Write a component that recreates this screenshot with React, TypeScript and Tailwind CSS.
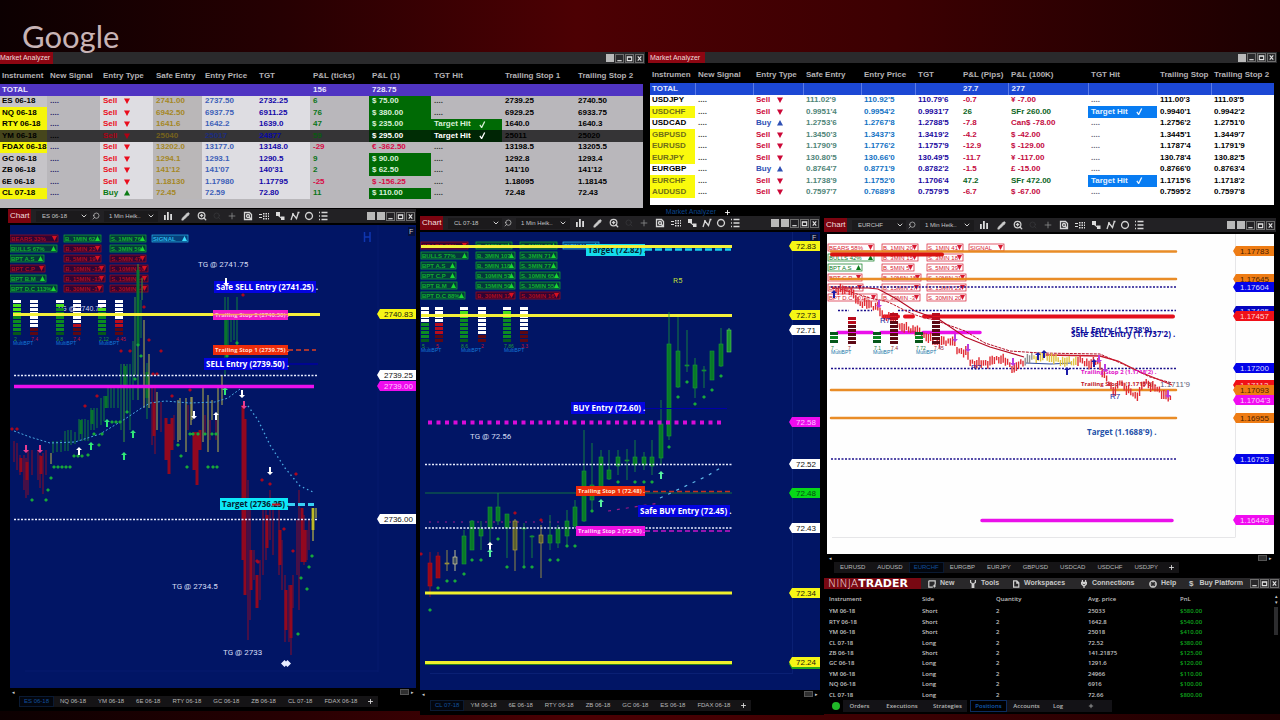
import React from "react";
import { ChevronDown, Pencil, Plus, Search, ZoomIn } from "lucide-react";

/* ---------- Market analyzer tables ---------- */

type Row = string[];

const FUTURES_HEAD = ["Instrument", "New Signal", "Entry Type", "Safe Entry", "Entry Price", "TGT", "P&L (ticks)", "P&L (1)", "TGT Hit", "Trailing Stop 1", "Trailing Stop 2"];
const FUTURES: Row[] = [
  ["ES 06-18", "....", "Sell", "2741.00", "2737.50", "2732.25", "6", "$ 75.00", "", "2739.25", "2740.50"],
  ["NQ 06-18", "....", "Sell", "6942.50", "6937.75", "6911.25", "76", "$ 380.00", "", "6929.25", "6933.75"],
  ["RTY 06-18", "....", "Sell", "1641.6", "1642.2", "1639.0", "47", "$ 235.00", "hit", "1640.0", "1640.3"],
  ["YM 06-18", "....", "Sell", "25040", "25017", "24877", "59", "$ 295.00", "hit", "25011", "25020"],
  ["FDAX 06-18", "....", "Sell", "13202.0", "13177.0", "13148.0", "-29", "€ -362.50", "", "13198.5", "13205.5"],
  ["GC 06-18", "....", "Sell", "1294.1", "1293.1", "1290.5", "9", "$ 90.00", "", "1292.8", "1293.4"],
  ["ZB 06-18", "....", "Sell", "141'12", "141'07", "140'31", "2", "$ 62.50", "", "141'10", "141'12"],
  ["6E 06-18", "....", "Sell", "1.18130", "1.17980", "1.17795", "-25", "$ -156.25", "", "1.18095", "1.18145"],
  ["CL 07-18", "....", "Buy", "72.45", "72.59", "72.80", "11", "$ 110.00", "", "72.48", "72.43"],
];
const FUTURES_YELLOW = ["NQ 06-18", "RTY 06-18", "FDAX 06-18", "CL 07-18"];
const FUTURES_COLS = ["w-[47px]", "w-[53px]", "w-[53px]", "w-[49px]", "w-[54px]", "w-[54px]", "w-[59px]", "w-[62px]", "w-[71px]", "w-[73px]", "w-[68px]"];

const FOREX_HEAD = ["Instrumen", "New Signal", "Entry Type", "Safe Entry", "Entry Price", "TGT", "P&L (Pips)", "P&L (100K)", "TGT Hit", "Trailing Stop", "Trailing Stop 2"];
const FOREX: Row[] = [
  ["USDJPY", "....", "Sell", "111.02'9", "110.92'5", "110.79'6", "-0.7", "¥ -7.00", "", "111.00'3", "111.03'5"],
  ["USDCHF", "....", "Sell", "0.9951'4", "0.9954'2", "0.9931'7", "26", "SFr 260.00", "hit", "0.9940'1", "0.9942'2"],
  ["USDCAD", "....", "Buy", "1.2753'6", "1.2767'8", "1.2788'5", "-7.8", "Can$ -78.00", "", "1.2756'2", "1.2751'0"],
  ["GBPUSD", "....", "Sell", "1.3450'3", "1.3437'3", "1.3419'2", "-4.2", "$ -42.00", "", "1.3445'1", "1.3449'7"],
  ["EURUSD", "....", "Sell", "1.1790'9", "1.1776'2", "1.1757'9", "-12.9", "$ -129.00", "", "1.1787'4", "1.1791'9"],
  ["EURJPY", "....", "Sell", "130.80'5", "130.66'0", "130.49'5", "-11.7", "¥ -117.00", "", "130.78'4", "130.82'5"],
  ["EURGBP", "....", "Buy", "0.8764'7", "0.8771'9", "0.8782'2", "-1.5", "£ -15.00", "", "0.8766'0", "0.8763'4"],
  ["EURCHF", "....", "Sell", "1.1738'9", "1.1752'0", "1.1706'4", "47.2", "SFr 472.00", "hit", "1.1715'6", "1.1718'2"],
  ["AUDUSD", "....", "Sell", "0.7597'7", "0.7689'8", "0.7579'5", "-6.7", "$ -67.00", "", "0.7595'2", "0.7597'8"],
];
const FOREX_BLACK = ["USDJPY", "USDCAD", "EURGBP"];
const FOREX_COLS = ["w-[45px]", "w-[58px]", "w-[50px]", "w-[58px]", "w-[54px]", "w-[45px]", "w-[48px]", "w-[80px]", "w-[69px]", "w-[54px]", "w-[63px]"];

function futuresCell(row: Row, i: number): string {
  const dark = row[0] === "YM 06-18";
  const loss = row[6].startsWith("-");
  if (i === 0) {
    if (dark) return "bg-[#46461c] text-black";
    return FUTURES_YELLOW.includes(row[0]) ? "bg-[#f6f60a] text-black" : "bg-[#c6c4c8] text-black";
  }
  if (i === 7) return dark ? "bg-[#002d05] text-white" : loss ? "text-[#d80a46]" : "bg-[#006a05] text-[#d8f0d8]";
  if (i === 8) return row[8] ? (dark ? "bg-[#002505] text-white" : "bg-[#006a05] text-[#d8f0d8]") : "text-[#333]";
  const bg = dark ? "bg-[#353436] " : i === 2 || i === 4 || i === 5 ? "bg-[#dedde2] " : i === 3 ? "bg-[#bab7b8] " : "";
  if (i === 1) return bg + (dark ? "text-black" : "text-[#26206a]");
  if (i === 2) return bg + (dark ? "text-[#b00014]" : row[2] === "Buy" ? "text-[#0b7a14]" : "text-[#ea0c1c]");
  if (i === 3) return bg + (dark ? "text-[#75621c]" : "text-[#a58725]");
  if (i === 4) return bg + (dark ? "text-[#1c2c80]" : "text-[#3c60b8]");
  if (i === 5) return bg + (dark ? "text-[#0808a8]" : "text-[#1408a8]");
  if (i === 6) return bg + (loss ? "text-[#d80a46]" : dark ? "text-[#0a5a12]" : "text-[#0a7418]");
  return bg + "text-black";
}

function forexCell(row: Row, i: number): string {
  const loss = row[6].startsWith("-");
  if (i === 0) return FOREX_BLACK.includes(row[0]) ? "text-black" : "bg-[#fafa0c] text-[#6f6f18]";
  if (i === 1) return "text-[#444]";
  if (i === 2) return row[2] === "Buy" ? "text-[#2f50b4]" : "text-[#cc0636]";
  if (i === 3) return "text-[#4f8578]";
  if (i === 4) return "text-[#1272c4]";
  if (i === 5) return "text-[#1a08a0]";
  if (i === 6 || i === 7) return loss ? "text-[#c40a40]" : "text-[#0b6424]";
  if (i === 8) return row[8] ? "bg-[#087cf2] text-[#e6f3ff]" : "text-[#667]";
  return "text-black";
}

function WindowButtons({ squares }: { squares: number }) {
  return (
    <div className="ml-auto flex items-center gap-[1px] pr-[1px]">
      {squares > 0 && <button aria-label="Link" className="size-[8px] bg-[#b9b9b9]" />}
      {squares > 1 && <button aria-label="Link interval" className="ml-[1px] size-[8px] bg-[#b9b9b9]" />}
      {["M1 6.500h5", "M1 2h5v4.500h-5zM1 2.500h5", "M1.500 1.500l4 5M5.500 1.500l-4 5"].map((d, i) => (
        <button key={d} aria-label={["Minimize", "Maximize", "Close"][i]} className="flex size-[9px] items-center justify-center border border-[#6e6e6e]">
          <svg viewBox="0 0 7 8" className="size-[7px] shrink-0" fill="none" stroke="#e2e2e2" strokeWidth="1.300"><path d={d} /></svg>
        </button>
      ))}
    </div>
  );
}

function Analyzer({ head, rows, cols, cell, total, tall, forex }: {
  head: string[]; rows: Row[]; cols: string[]; cell: (r: Row, i: number) => string; total: [string, string]; tall: boolean; forex: boolean;
}) {
  return (
    <section className={forex ? "bg-black pr-[6px] pl-[2px] pb-[3px]" : "bg-black pr-[5px]"}>
      <div className={`flex items-center bg-[#2a2a2c] ${tall ? "h-[12px]" : "h-[11px]"} ${forex ? "-mr-[3px] -ml-[2px]" : "-mr-[2px]"}`}>
        <h2 className={`self-stretch bg-[#8c0612] text-[7px] leading-[11px] whitespace-nowrap text-[#efdada] ${forex ? "w-[57px] pl-[2px]" : "w-[53px]"}`}>Market Analyzer</h2>
        <WindowButtons squares={1} />
      </div>
      <div className={forex ? "bg-white pb-[7px]" : "bg-[#b9b7bb] pb-[9px]"}>
        <table className="h-[135px] w-full table-fixed border-collapse text-left text-[8px] leading-[10px] font-bold whitespace-nowrap">
          <colgroup>{cols.map((c, i) => <col key={i} className={c} />)}</colgroup>
          <thead>
            <tr className="h-[20px] bg-black text-[#b4b2b4]">
              {head.map((h, i) => <th key={h} className={`p-0 pt-[3px] ${i === 0 ? "pl-[2px]" : "pl-[3px]"}`}>{h}</th>)}
            </tr>
          </thead>
          <tbody>
            <tr className={forex ? "bg-[#1c48d4] text-[#e4eaff]" : "bg-[#4f34c2] text-[#eae4ff]"}>
              {head.map((h, i) => (
                <td key={h} className={`p-0 ${i === 0 ? "pl-[2px]" : "pl-[3px]"} ${forex && i < 10 && i !== 5 ? "border-r border-[#5b7be6]" : ""}`}>
                  {i === 0 ? "TOTAL" : i === 6 ? total[0] : i === 7 ? total[1] : ""}
                </td>
              ))}
            </tr>
            {rows.map((r) => (
              <tr key={r[0]} className={r[0] === "YM 06-18" ? "bg-[#353436]" : ""}>
                {r.map((v, i) => (
                  <td key={i} className={`p-0 ${i === 0 ? "pl-[2px]" : "pl-[3px]"} ${cell(r, i)}`}>
                    {i === 2 ? (
                      <span className="flex items-center gap-[6px]">
                        <span className="w-[15px]">{v}</span>
                        <svg viewBox="0 0 6 6" className="size-[6px]" fill="currentColor"><path d={v === "Sell" ? "M0 .5h6L3 6z" : "M0 5.500h6L3 0z"} /></svg>
                      </span>
                    ) : i === 8 ? (
                      v ? (
                        <span className="flex items-center gap-[8px]">Target Hit
                          <svg viewBox="0 0 8 8" className="size-[7px]" fill="none" stroke="currentColor" strokeWidth="1.500"><path d="M1 4.500l2 3L6.500.5" /></svg>
                        </span>
                      ) : "...."
                    ) : v}
                  </td>
                ))}
              </tr>
            ))}
          </tbody>
        </table>
      </div>
    </section>
  );
}

/* ---------- Chart chrome ---------- */

function ToolIcon({ label, d, w = "w-[16px]", fill }: { label: string; d: string; w?: string; fill?: boolean }) {
  return (
    <button aria-label={label} className={`flex justify-center ${w}`}>
      <svg viewBox="0 0 10 10" className="size-[10px]" fill={fill ? "#dcdcdc" : "none"} stroke={fill ? "none" : "#d6d6d6"} strokeWidth="1.300"><path d={d} /></svg>
    </button>
  );
}

function Toolbar({ symbol }: { symbol: string }) {
  return (
    <div className="flex h-[14px] items-center bg-[#222124] text-[#cfcfcf]">
      <h2 className="w-[23px] self-stretch bg-[#7c0410] pl-[2px] text-[8px] leading-[14px] text-[#f2dede]">Chart</h2>
      <label className="ml-[5px] flex h-[11px] w-[54px] items-center bg-[#1b1a1c] pl-[6px]">
        <select aria-label="Instrument" className="w-[38px] appearance-none bg-transparent text-[6px] leading-[10px] text-[#c4c4c4]"><option>{symbol}</option></select>
        <ChevronDown size={8} strokeWidth={3} />
      </label>
      <button aria-label="Find instrument" className="mx-[2px]"><Search size={8} className="-scale-x-100" /></button>
      <label className="ml-[2px] flex h-[11px] w-[54px] items-center bg-[#1b1a1c] pl-[5px]">
        <select aria-label="Interval" className="w-[38px] appearance-none bg-transparent text-[6px] leading-[10px] text-[#c4c4c4]"><option>1 Min Heik..</option></select>
        <ChevronDown size={8} strokeWidth={3} />
      </label>
      <div className="flex items-center pl-[2px]">
        <ToolIcon label="Chart style" fill d="M1 4h1.800v5H1zM4 1h1.800v8H4zM7.200 3h1.800V9H7.200z" />
        <button aria-label="Draw" className="flex w-[18px] justify-center"><Pencil size={9} fill="#ccc" /></button>
        <button aria-label="Zoom in" className="flex w-[16px] justify-center"><ZoomIn size={10} strokeWidth={3} /></button>
        <button aria-label="Zoom out" className="flex w-[14px] justify-center text-[#3a3a3c]"><Search size={8} /></button>
        <button aria-label="Crosshair" className="flex w-[16px] justify-center text-[#8a8a8a]"><Plus size={10} /></button>
        <ToolIcon label="Chart trader" d="M1.500 1.500h5l2 2v5h-7zM3.500 5a1.500 1.500 0 1 0 3 0a1.500 1.500 0 1 0-3 0M6 6l2 2" />
        <ToolIcon label="Data series" fill d="M0 3h3v1H0zM0 6h3v1H0zM4 2h1.500v1.500H4zM6.500 2H8v1.500H6.500zM9 2h1v1.500H9zM4 4.500h1.500V6H4zM6.500 4.500H8V6H6.500zM9 4.500h1V6H9zM4 7h1.500v1.500H4zM6.500 7H8v1.500H6.500zM9 7h1v1.500H9z" />
        <ToolIcon label="Indicators" fill d="M1 1h4v4H1zM3.500 4l3 2.500-.7.800-3-2.500zM6 5.500h3.500V9H6z" />
        <ToolIcon label="Strategies" w="w-[14px]" d="M1 9L3 3L6.500 7.500L8.500 1M2 3h2M7.500 1.500h2" />
        <ToolIcon label="Drawing tools" w="w-[14px]" d="M5 1.500a3.500 3.500 0 1 0 .01 0z" />
        <ToolIcon label="Properties" w="w-[14px]" d="M1 1.500h1M3.500 1.500h6M1 5h1M3.500 5h6M1 8.500h1M3.500 8.500h6" />
      </div>
      <WindowButtons squares={2} />
    </div>
  );
}

function ChartTabs({ tabs, active, pad }: { tabs: string[]; active: string; pad: string }) {
  return (
    <>
      <div className="flex h-[8px] items-center justify-between px-[2px] text-[5px] leading-none text-[#cfcfcf]">
        <span>◂</span>
        <span className="ml-auto mr-[2px] h-[6px] w-[9px] border border-[#555] bg-[#303030]" />
        <span>▸</span>
      </div>
      <nav className={`flex h-[11px] text-[6px] leading-[11px] whitespace-nowrap ${pad}`}>
        {tabs.map((t) => (
          <button key={t} className={t === active ? "border border-[#0a1a33] bg-[#03060d] px-[4px] leading-[9px] text-[#12509c]" : "bg-[#151416] px-[6px] text-[#b8b8b8]"}>{t}</button>
        ))}
        <button aria-label="Add tab" className="flex w-[15px] items-center justify-center bg-[#151416] text-[#ddd]"><Plus size={7} strokeWidth={3} /></button>
      </nav>
    </>
  );
}

/* ---------- Chart drawing parts ---------- */

const ARIAL = "font-[Liberation_Sans,Arial,sans-serif]";
const SEGOE = "font-[Open_Sans,Noto_Sans,sans-serif]";

function PriceTag({ x, y, w, fill, ink, text }: { x: number; y: number; w: number; fill: string; ink: string; text: string }) {
  return (
    <g>
      <path d={`M${x} ${y}l3-5h${w - 3}v10h-${w - 3}z`} fill={fill} />
      <text x={x + 7} y={y + 3} className={`text-[8px] ${ARIAL}`} fill={ink}>{text}</text>
    </g>
  );
}

type BadgeData = [number, number, number, string, "u" | "d" | "s"];

function Badges({ items, light }: { items: BadgeData[]; light?: boolean }) {
  return (
    <g className={`text-[6px] ${light ? "" : "font-bold"} ${ARIAL}`}>
      {items.map(([x, y, w, t, k]) => {
        const c = light ? (k === "u" ? "#087a1c" : "#d81830") : k === "u" ? "#12b02e" : k === "s" ? "#28b8e8" : "#a80c1c";
        const box = light ? "none" : k === "u" ? "#04383c" : k === "s" ? "#06407c" : "#300434";
        const ax = x + w - 6;
        return (
          <g key={`${x}-${y}`}>
            <rect x={x} y={y - 4} width={w} height={7} fill={box} stroke={c} strokeWidth=".7" />
            <text x={x + 1} y={y + 2} fill={c}>{t}</text>
            <path d={k === "d" ? `M${ax} ${y - 3}h5l-2.500 5z` : `M${ax} ${y + 2}h5l-2.500-5z`} fill={light ? c : k === "u" ? "#18d830" : k === "s" ? "#3cdcff" : "#d81020"} />
          </g>
        );
      })}
    </g>
  );
}

const METER: Record<string, string> = { w: "#ffffff", l: "#4be01c", g: "#0c8a22", d: "#06581a", r: "#b80c1c", m: "#5c0814" };

function Meters({ bars, y }: { bars: [number, string][]; y: number }) {
  return (
    <g>
      {bars.map(([x, s]) => s.split("").map((c, i) => <rect key={`${x}-${i}`} x={x} y={y + i * 4} width={8} height={3} fill={METER[c]} />))}
    </g>
  );
}

function Lines({ segs, color, width = 1 }: { segs: number[][]; color: string; width?: number }) {
  return <path d={segs.map(([x, a, b]) => `M${x} ${a}V${b}`).join("")} stroke={color} strokeWidth={width} fill="none" />;
}

function Stars({ pts, color }: { pts: number[][]; color: string }) {
  return <path d={pts.map(([x, y]) => `M${x - 1.5} ${y}h3M${x} ${y - 1.5}v3`).join("")} stroke={color} strokeWidth="1.800" />;
}

function Arrows({ pts, color, down }: { pts: number[][]; color: string; down?: boolean }) {
  const s = down ? 1 : -1;
  return <path d={pts.map(([x, y]) => `M${x - 1} ${y - 4 * s}h2v${5 * s}h2l-3 ${3 * s}l-3 ${-3 * s}h2z`).join("")} fill={color} />;
}

function Flag({ x, y, w, fill, ink, text, small }: { x: number; y: number; w: number; fill: string; ink: string; text: string; small?: boolean }) {
  return (
    <g>
      <rect x={x} y={small ? y - 5 : y - 6} width={w} height={small ? 10 : 12} fill={fill} />
      <text x={x + 2} y={small ? y + 2 : y + 3} fill={ink} className={`font-bold ${SEGOE} ${small ? "text-[6px]" : "text-[8px]"}`}>{text}</text>
    </g>
  );
}

/* ---------- ES chart ---------- */

const ES_BADGES: BadgeData[] = [
  [10, 239, 48, "BEARS 33%", "d"], [10, 249, 47, "BULLS 67%", "u"], [10, 259, 34, "BPT A.S", "u"], [10, 269, 35, "BPT C.P", "d"], [10, 279, 36, "BPT B.M", "u"], [10, 289, 47, "BPT D.C 113%", "u"],
  [64, 239, 37, "B. 1MIN 62", "u"], [64, 249, 37, "B. 3MIN 23", "d"], [64, 259, 37, "B. 5MIN 19", "d"], [64, 269, 41, "B. 10MIN -12", "d"], [64, 279, 41, "B. 15MIN -11", "d"], [64, 289, 39, "B. 30MIN -17", "d"],
  [110, 239, 36, "S. 1MIN 76", "u"], [110, 249, 36, "S. 3MIN 59", "u"], [110, 259, 36, "S. 5MIN 47", "d"], [110, 269, 38, "S. 10MIN 10", "d"], [110, 279, 38, "S. 15MIN -4", "d"], [110, 289, 38, "S. 30MIN -4", "d"],
  [152, 239, 36, "SIGNAL", "s"],
];
const ES_GREEN = [[53, 441, 453], [57, 441, 452], [61, 440, 452], [65, 431, 451], [68, 430, 451], [71, 430, 445], [75, 432, 444], [79, 419, 441], [82, 419, 441], [85, 419, 441], [88, 420, 441], [91, 408, 430], [94, 408, 430], [97, 408, 428], [101, 398, 425], [104, 396, 421], [108, 388, 408], [111, 388, 408], [114, 388, 408], [118, 388, 408], [121, 364, 430], [127, 364, 412], [130, 364, 430], [133, 341, 400], [141, 300, 338], [147, 363, 419], [225, 297, 375], [228, 297, 345], [231, 310, 342], [234, 312, 340], [237, 297, 345]];
const ES_GREEN_WIDE = [[81, 420, 434], [92, 410, 424], [106, 396, 408], [125, 366, 388], [138, 270, 345], [147, 372, 398], [226, 310, 350]];
const ES_YELLOW = [[51, 453, 464], [144, 320, 408], [149, 354, 408], [157, 392, 430], [178, 400, 442], [180, 398, 440], [186, 398, 452], [191, 397, 425], [192, 397, 420], [203, 387, 442], [208, 395, 452], [212, 400, 420], [218, 388, 452], [222, 375, 405]];
const ES_RED = [[14, 441, 462], [17, 443, 470], [20, 455, 475], [24, 455, 490], [26, 458, 498], [28, 450, 495], [32, 450, 475], [38, 450, 480], [40, 455, 488], [43, 453, 494], [46, 450, 475], [152, 385, 445], [155, 388, 454], [161, 402, 432], [174, 415, 440], [188, 405, 430], [205, 415, 435], [210, 420, 440], [216, 420, 440], [248, 480, 640], [250, 500, 620], [254, 550, 580], [260, 560, 600], [263, 500, 575], [266, 500, 560], [270, 490, 540], [273, 510, 555], [279, 500, 575], [282, 540, 590], [285, 575, 642], [289, 585, 642], [293, 575, 608], [291, 600, 655], [297, 520, 575], [299, 490, 610], [304, 515, 565], [307, 530, 560], [309, 520, 550]];
const ES_RED_WIDE = [[21, 458, 472], [27, 462, 480], [41, 456, 474], [154, 402, 436], [166, 418, 460], [169, 424, 474], [172, 418, 450], [194, 432, 470], [197, 432, 485], [200, 430, 450], [243, 405, 560], [245, 419, 595], [251, 550, 590], [257, 575, 608], [267, 515, 548], [280, 530, 565], [286, 590, 630], [291, 585, 638], [302, 508, 562], [305, 530, 562]];
const ES_STARS = [[32, 500], [46, 500], [48, 490], [51, 478], [54, 467], [58, 467], [62, 467], [66, 467], [70, 467], [74, 456], [78, 456], [82, 456], [88, 455], [94, 434], [99, 445], [102, 434], [112, 422], [116, 422], [120, 422], [127, 412], [135, 379], [138, 345], [141, 356], [178, 445], [181, 456], [187, 467], [190, 434], [193, 434], [198, 434], [205, 434], [212, 434], [216, 434], [208, 467], [213, 467], [217, 467], [227, 356], [231, 364], [237, 343], [312, 556], [309, 567], [301, 578], [307, 589], [298, 634]];
const ES_REDSTARS = [[85, 406], [97, 396], [121, 351], [130, 351], [161, 351], [149, 340], [144, 307], [153, 374], [157, 374], [172, 396], [190, 390], [12, 429], [17, 429], [243, 295], [252, 505], [258, 562], [262, 480], [270, 484], [284, 529], [293, 551], [257, 561], [296, 474]];

function EsChart() {
  return (
    <svg viewBox="10 225 406 463" className="block w-full bg-[#011565]" role="img" aria-label="ES 06-18 one minute chart">
      <path d="M378 225v447M25 671h353" stroke="#061b6e" strokeWidth="1" />
      <Badges items={ES_BADGES} />
      <text x="57" y="311" fill="#d5dcf4" className={`text-[7px] ${ARIAL}`}>TG @ 2740.75</text>
      <Meters y={300} bars={[[13, "wlllggggd"], [30, "wwwwwwwmm"], [56, "wlggggggd"], [73, "wwwwwwrmm"], [98, "wwlgggggd"], [115, "wwwwwrrmm"]]} />
      <g className={`text-[5px] ${ARIAL}`} fill="#1c9a3c">
        <text x="14" y="341">2 ..</text><text x="56" y="341">9.8</text><text x="99" y="341">2.12</text>
        <g fill="#1678d8"><text x="13" y="345">MultiBPT</text><text x="56" y="345">MultiBPT</text><text x="99" y="345">MultiBPT</text></g>
        <g fill="#c01030"><text x="31" y="341">7.4</text><text x="73" y="341">7.4</text><text x="116" y="341">4.45</text></g>
      </g>
      <Lines segs={ES_GREEN} color="#13803c" />
      <Lines segs={[[124, 364, 442], [135, 297, 375], [138, 264, 400], [142, 278, 300]]} color="#3f9a34" />
      <Lines segs={ES_GREEN_WIDE} color="#08742e" width={3} />
      <Lines segs={ES_RED} color="#8c0c2a" />
      <Lines segs={ES_RED_WIDE} color="#92081f" width={3} />
      <Lines segs={ES_YELLOW} color="#bdb648" />
      <path d="M14 431L30 437L50 443L75 442L100 434L125 419L140 409L150 403L165 401L190 403L215 402L228 398L240 389" fill="none" stroke="#4aa8e0" strokeWidth="1" strokeDasharray="2 2" />
      <path d="M248 406L258 420L270 445L285 468L300 486L313 492" fill="none" stroke="#4aa8e0" strokeWidth="1.300" strokeDasharray="1.500 3" />
      <Stars pts={ES_STARS} color="#18a83a" />
      <Stars pts={ES_REDSTARS} color="#a80820" />
      <Arrows pts={[[79, 451], [216, 416]]} color="#ffffff" />
      <Arrows pts={[[91, 446], [107, 423], [124, 456], [133, 434], [225, 391]]} color="#30e878" />
      <Arrows pts={[[194, 415], [242, 394], [270, 471]]} color="#ffffff" down />
      <Arrows pts={[[26, 449], [40, 449], [244, 405]]} color="#e83c90" down />
      <path d="M13 314.500h307" stroke="#f4f03a" strokeWidth="3" />
      <path d="M14 375.500h304M14 519.500h304" stroke="#e8ecff" strokeWidth="1.500" strokeDasharray="2 1.500" />
      <path d="M14 386.500h300" stroke="#ec10ec" strokeWidth="3.500" />
      <path d="M288 350h28" stroke="#e04020" strokeWidth="1.500" strokeDasharray="5 3" />
      <path d="M288 504.500h26" stroke="#38d0f4" strokeWidth="3" strokeDasharray="7 3" />
      <path d="M288 364h30" stroke="#0000a0" strokeWidth="1.500" />
      <text x="198" y="267" fill="#d5dcf4" className="font-[Roboto,sans-serif] text-[8px]">TG @ 2741.75</text>
      <text x="172" y="589" fill="#d5dcf4" className="font-[Roboto,sans-serif] text-[8px]">TG @ 2734.5</text>
      <text x="223" y="655" fill="#d5dcf4" className="font-[Roboto,sans-serif] text-[8px]">TG @ 2733</text>
      <Flag x={214} y={287} w={102} fill="#0404e0" ink="#fff" text="Safe SELL Entry (2741.25) ." />
      <Flag x={204} y={364} w={84} fill="#0404e0" ink="#fff" text="SELL Entry (2739.50) ." />
      <Flag x={213} y={350} w={75} fill="#ee2c0a" ink="#ffd8c8" text="Trailing Stop 1 (2739.75) ." small />
      <Flag x={213} y={315} w={75} fill="#ee18c8" ink="#ffc0e8" text="Trailing Stop 2 (2740.50) ." small />
      <path d="M213 314.500h75" stroke="#f8a060" strokeWidth="1.500" />
      <Flag x={220} y={504} w={68} fill="#0ce8f8" ink="#042030" text="Target (2736.25) ." />
      <path d="M272 504.500h8" stroke="#c81020" strokeWidth="2" />
      <Lines segs={[[313, 508, 530]]} color="#9a9a10" width={3} />
      <Lines segs={[[313, 508, 541], [316, 508, 518]]} color="#e0d840" />
      <Arrows pts={[[226, 282]]} color="#ffffff" down />
      <path d="M281 663.500l3.500-3.500l1.500 1.500l1.500-1.500l3.500 3.500l-3.500 3.500l-1.500-1.500l-1.500 1.500z" fill="#e6ecff" />
      <path d="M364.500 232v10M370 232v10M365 237h5" fill="none" stroke="#0f36b0" strokeWidth="1.500" />
      <rect x="408" y="227" width="7" height="9" fill="#06103a" />
      <text x="409" y="234" fill="#c8c8c8" className={`text-[7px] ${ARIAL}`}>F</text>
      <PriceTag x={377} y={314} w={39} fill="#f6f616" ink="#20200a" text="2740.83" />
      <PriceTag x={377} y={375} w={39} fill="#ffffff" ink="#111" text="2739.25" />
      <PriceTag x={377} y={386} w={39} fill="#ee0cee" ink="#ffc8ff" text="2739.00" />
      <PriceTag x={377} y={519} w={39} fill="#ffffff" ink="#111" text="2736.00" />
    </svg>
  );
}

/* ---------- CL chart ---------- */

const CL_BADGES: BadgeData[] = [
  [421, 246, 47, "BEARS 23%", "d"], [421, 256, 47, "BULLS 77%", "u"], [421, 266, 35, "BPT A.S", "u"], [421, 276, 35, "BPT C.P", "u"], [421, 286, 36, "BPT B.M", "u"], [421, 296, 44, "BPT D.C 88%", "u"],
  [476, 246, 36, "B. 1MIN 89", "u"], [476, 256, 39, "B. 3MIN 107", "u"], [476, 266, 39, "B. 5MIN 118", "u"], [476, 276, 39, "B. 10MIN 57", "u"], [476, 286, 39, "B. 15MIN 50", "u"], [476, 296, 39, "B. 30MIN 12", "d"],
  [520, 246, 37, "S. 1MIN 68", "u"], [520, 256, 37, "S. 3MIN 71", "u"], [520, 266, 37, "S. 5MIN 77", "u"], [520, 276, 40, "S. 10MIN 65", "u"], [520, 286, 40, "S. 15MIN 55", "u"], [520, 296, 40, "S. 30MIN 16", "d"],
  [563, 246, 36, "SIGNAL", "s"],
];
/* x, wick top, wick bottom, body top, body bottom, colour key */
const CL_CANDLES: [number, number, number, number, number, "g" | "r" | "y" | "w" | "l"][] = [
  [430, 552, 597, 563, 586, "r"], [438, 552, 578, 556, 578, "r"], [447, 550, 571, 563, 564, "y"], [455, 550, 571, 557, 564, "w"], [464, 530, 564, 536, 564, "g"], [472, 520, 550, 521, 550, "g"], [481, 521, 550, 529, 536, "g"], [490, 507, 550, 507, 528, "g"], [498, 493, 525, 507, 521, "g"], [507, 514, 558, 514, 528, "g"], [515, 519, 571, 521, 550, "y"], [524, 523, 567, 528, 528, "g"], [532, 535, 558, 536, 536, "g"], [541, 525, 578, 535, 543, "y"], [550, 515, 550, 535, 543, "g"], [558, 525, 548, 529, 543, "g"], [567, 510, 545, 521, 536, "g"], [575, 500, 528, 507, 526, "g"], [584, 430, 522, 471, 521, "g"], [592, 443, 510, 485, 500, "g"], [601, 450, 495, 457, 490, "g"], [609, 450, 480, 470, 479, "g"], [618, 450, 475, 457, 466, "g"], [627, 449, 480, 460, 460, "g"], [635, 440, 472, 457, 465, "g"], [644, 452, 470, 457, 465, "g"], [652, 440, 475, 457, 466, "g"], [661, 400, 465, 424, 458, "g"], [669, 312, 440, 344, 436, "g"], [678, 317, 388, 351, 387, "g"], [687, 330, 372, 365, 366, "g"], [695, 358, 398, 365, 388, "g"], [704, 366, 388, 370, 370, "g"], [712, 351, 380, 351, 380, "g"], [721, 328, 367, 344, 366, "g"], [729, 328, 352, 330, 352, "l"],
];
const CANDLE: Record<string, [string, string]> = { g: ["#087a28", "#1a9a38"], r: ["#980818", "#b01020"], y: ["#5a6030", "#b8a840"], w: ["#405060", "#f0e8a0"], l: ["#18942c", "#5ccc60"] };
const CL_STARS = [[430, 610], [438, 588], [447, 581], [455, 581], [464, 574], [472, 560], [481, 560], [498, 539], [507, 567], [524, 567], [532, 567], [550, 560], [558, 560], [567, 546], [575, 546], [592, 511], [609, 493], [618, 482], [635, 482], [644, 482], [652, 482], [669, 447], [678, 397], [687, 382], [695, 404], [704, 397], [712, 390], [721, 376]];

function ClChart() {
  return (
    <svg viewBox="420 232 400 458" className="block w-full bg-[#011565]" role="img" aria-label="CL 07-18 one minute chart">
      <path d="M792.500 232v442M430 673.500h362" stroke="#0a2074" strokeWidth="1" />
      <Badges items={CL_BADGES} />
      <path d="M421 246.500h311" stroke="#f4f03a" strokeWidth="3" />
      <Flag x={586} y={250} w={59} fill="#14dcec" ink="#042030" text="Target (72.82) ." />
      <path d="M580 246.500h152" stroke="#f4f03a" strokeWidth="3" />
      <path d="M645 249.500h86" stroke="#18d0f0" strokeWidth="2.500" strokeDasharray="7 3" />
      <Meters y={307} bars={[[421, "wwwwggggd"], [435, "wwwwrrrmm"], [460, "wllgggggd"], [478, "wwwwwwwmm"], [503, "wllgggggd"], [520, "wwwwwwmmm"]]} />
      <path d="M421 315.500h311" stroke="#f4f03a" strokeWidth="3" />
      <g className={`text-[5px] ${ARIAL}`} fill="#1c9a3c">
        <text x="422" y="348">5 ..</text><text x="461" y="348">8.6</text><text x="504" y="348">7.86</text>
        <g fill="#1678d8"><text x="421" y="352">MultiBPT</text><text x="461" y="352">MultiBPT</text><text x="504" y="352">MultiBPT</text></g>
        <g fill="#c01030"><text x="436" y="348">5</text><text x="481" y="348">2</text><text x="521" y="348">3.3</text></g>
      </g>
      <path d="M425 493h307" stroke="#127040" strokeWidth="1.200" />
      <path d="M429 522h140" stroke="#a01888" strokeWidth="1" strokeDasharray="2 6" />
      <path d="M608 511L640 506L660 503" fill="none" stroke="#a01888" strokeWidth="1.200" strokeDasharray="3 6" />
      <path d="M660 498L675 491L690 484L707 476L722 467" fill="none" stroke="#60b8e8" strokeWidth="1.200" strokeDasharray="3 6" />
      {CL_CANDLES.map(([x, a, b, t, u, k]) => (
        <g key={x}>
          <path d={`M${x} ${a}V${b}`} stroke={CANDLE[k][1]} strokeWidth="1" opacity=".8" />
          <rect x={x - 2} y={t} width={4} height={Math.max(u - t, 1)} fill={CANDLE[k][0]} stroke={CANDLE[k][1]} strokeWidth=".6" />
        </g>
      ))}
      <Stars pts={CL_STARS} color="#18a83a" />
      <Stars pts={[[515, 513], [541, 520], [421, 554]]} color="#a80820" />
      <Arrows pts={[[490, 546]]} color="#ffffff" />
      <Arrows pts={[[490, 553], [601, 503], [661, 475]]} color="#58f0a0" />
      <path d="M425 464.500h307M425 528h307" stroke="#e8ecff" strokeWidth="1.500" strokeDasharray="2 1.500" />
      <path d="M428 422.500h295" stroke="#d80cd8" strokeWidth="4" strokeDasharray="4 4.500" />
      <path d="M645 408.500h82" stroke="#0000a8" strokeWidth="1" />
      <path d="M645 491.500h86" stroke="#c83020" strokeWidth="1.500" strokeDasharray="5 3" />
      <path d="M645 531h86" stroke="#c814c8" strokeWidth="1.500" strokeDasharray="5 3" />
      <path d="M425 593h307M425 662.500h307" stroke="#f0f02c" strokeWidth="3" />
      <path d="M425 664.500h307" stroke="#2a8020" strokeWidth="1" />
      <Flag x={571} y={408} w={74} fill="#0404e0" ink="#fff" text="BUY Entry (72.60) ." />
      <Flag x={638} y={511} w={92} fill="#0404e0" ink="#fff" text="Safe BUY Entry (72.45) ." />
      <Flag x={576} y={491} w={69} fill="#ee2c0a" ink="#ffe0c8" text="Trailing Stop 1 (72.48) ." small />
      <Flag x={576} y={531} w={69} fill="#ee10e0" ink="#ffd0f8" text="Trailing Stop 2 (72.43) ." small />
      <text x="470" y="439" fill="#d5dcf4" className="font-[Roboto,sans-serif] text-[8px]">TG @ 72.56</text>
      <text x="673" y="283" fill="#b8d83c" className="font-[Roboto,sans-serif] text-[8px]">R5</text>
      <rect x="810" y="234" width="8" height="9" fill="#06103a" />
      <text x="812" y="240" fill="#c8c8c8" className={`text-[7px] ${ARIAL}`}>F</text>
      <PriceTag x={789} y={246} w={31} fill="#f6f616" ink="#20200a" text="72.83" />
      <PriceTag x={789} y={315} w={31} fill="#f6f616" ink="#20200a" text="72.73" />
      <PriceTag x={789} y={330} w={31} fill="#ffffff" ink="#111" text="72.71" />
      <PriceTag x={789} y={422} w={31} fill="#ee0cee" ink="#ffc8ff" text="72.58" />
      <PriceTag x={789} y={464} w={31} fill="#ffffff" ink="#111" text="72.52" />
      <PriceTag x={789} y={493} w={31} fill="#08d818" ink="#044a10" text="72.48" />
      <PriceTag x={789} y={528} w={31} fill="#ffffff" ink="#111" text="72.43" />
      <PriceTag x={789} y={593} w={31} fill="#f6f616" ink="#20200a" text="72.34" />
      <PriceTag x={789} y={664} w={31} fill="#28a818" ink="#20200a" text="" />
      <PriceTag x={789} y={662} w={31} fill="#f6f616" ink="#20200a" text="72.24" />
    </svg>
  );
}

/* ---------- EURCHF chart ---------- */

const EUR_BADGES: BadgeData[] = [
  [828, 248, 46, "BEARS 58%", "d"], [828, 258, 46, "BULLS 42%", "u"], [828, 268, 34, "BPT A.S", "u"], [828, 278, 34, "BPT C.P", "d"], [828, 288, 35, "BPT B.M", "d"], [828, 298, 49, "BPT D.C 101%", "d"],
  [882, 248, 36, "B. 1MIN 20", "d"], [882, 258, 36, "B. 3MIN 15", "d"], [882, 268, 32, "B. 5MIN 5", "d"], [882, 278, 39, "B. 10MIN 18", "d"], [882, 288, 38, "B. 15MIN 17", "d"], [882, 298, 38, "B. 30MIN -3", "d"],
  [927, 248, 36, "S. 1MIN 41", "d"], [927, 258, 36, "S. 3MIN 18", "d"], [927, 268, 36, "S. 5MIN 39", "d"], [927, 278, 39, "S. 10MIN 21", "d"], [927, 288, 39, "S. 15MIN 23", "d"], [927, 298, 39, "S. 30MIN 20", "d"],
  [969, 248, 35, "SIGNAL", "d"],
];
const EUR_ANCHORS = [[835, 290], [850, 290], [858, 302], [878, 307], [882, 316], [895, 318], [900, 327], [915, 330], [935, 342], [945, 342], [954, 340], [956, 350], [966, 352], [970, 362], [980, 364], [990, 362], [1000, 358], [1008, 363], [1014, 369], [1024, 361], [1032, 358], [1045, 356], [1060, 361], [1072, 362], [1078, 360], [1090, 364], [1098, 361], [1104, 375], [1110, 385], [1115, 392], [1120, 382], [1128, 390], [1136, 397], [1145, 382], [1155, 388], [1165, 395], [1173, 402]];

function priceAt(x: number): number {
  const i = Math.max(1, EUR_ANCHORS.findIndex((p) => p[0] >= x));
  const [x0, y0] = EUR_ANCHORS[i - 1];
  const [x1, y1] = EUR_ANCHORS[i];
  return y0 + ((y1 - y0) * (x - x0)) / (x1 - x0);
}

const EUR_BARS = Array.from({ length: 153 }, (_, i) => {
  const x = 836 + i * 2.2;
  const swing = Math.sin(i * 2.3) * 1.5 + Math.cos(i * 1.1);
  const half = 2 + Math.abs(Math.sin(i * 3.7)) * 2.5;
  const y = priceAt(x) + swing;
  return { x, top: y - half, bottom: y + half };
});

function barPath(from: number, to: number): string {
  return EUR_BARS.filter((b) => b.x >= from && b.x < to).map((b) => `M${b.x.toFixed(1)} ${b.top.toFixed(1)}V${b.bottom.toFixed(1)}`).join("");
}

const EUR_TAGS: [number, string, string, string][] = [
  [251, "#ee7c14", "#4a1c00", "1.17783"], [279, "#ee7c14", "#4a1c00", "1.17645"], [287, "#0404e8", "#d8dcff", "1.17604"], [311, "#0404c0", "#d8dcff", "1.17485"], [316, "#f01018", "#ffd0d0", "1.17457"], [368, "#0404e8", "#d8dcff", "1.17200"], [385, "#f01018", "#ffd0d0", "1.17112"], [390, "#ee7c14", "#4a1c00", "1.17093"], [400, "#f00cf0", "#ffd0ff", "1.1704'3"], [418, "#ee7c14", "#4a1c00", "1.16955"], [459, "#0404e8", "#d8dcff", "1.16753"], [520, "#f00cf0", "#ffd0ff", "1.16449"],
];

function EurChart() {
  return (
    <svg viewBox="827 234 447 320" className="block w-full bg-[#fefefe]" role="img" aria-label="EURCHF one minute chart">
      <path d="M1235.500 234v303.500M832 537.500h403" stroke="#e6e6e8" strokeWidth="1" fill="none" />
      <Badges items={EUR_BADGES} light />
      <path d="M831 251.500h345M831 279h345M831 390h345M831 418h345" stroke="#e8861c" strokeWidth="2.500" strokeLinecap="round" opacity=".95" />
      <path d="M832 254.500h110" stroke="#d81410" strokeWidth="4" strokeLinecap="round" />
      <path d="M831 287h345M838 310.500h11M857 310.500h15M898 310.500h278M831 368.500h345M831 459h345" stroke="#1c108c" strokeWidth="1.500" strokeDasharray="2 1.500" />
      <path d="M884 316.500h14M905 316.500h8M924 316.500h249" stroke="#e4101c" strokeWidth="4" strokeLinecap="round" />
      <path d="M838 332.500h34M881 332.500h34M923 332.500h57M982 520.500h190" stroke="#ea10ea" strokeWidth="3.500" strokeLinecap="round" />
      <path d="M832 288C850 290 865 298 880 300S905 315 935 320" fill="none" stroke="#c01c2c" strokeWidth="1" strokeDasharray="3 1" />
      <path d="M832 288L868 288L878 289L895 298L915 311L940 320L965 337L990 347L1024 357" fill="none" stroke="#b40c24" strokeWidth="1.200" />
      <path d="M940 322L965 331L985 343L1010 351L1040 353L1100 354L1125 365L1150 377L1172 383" fill="none" stroke="#b40c24" strokeWidth="1" strokeDasharray="3 1" />
      <path d="M1046 355L1100 356L1118 361L1140 372L1172 385" fill="none" stroke="#c8182c" strokeWidth="1.300" />
      <path d="M1026 363l25 1l20-1" fill="none" stroke="#2c48a0" strokeWidth="1" />
      <path d={barPath(830, 1024)} stroke="#e02c34" strokeWidth="1.400" />
      <path d={barPath(1024, 1034)} stroke="#909090" strokeWidth="1.400" />
      <path d={barPath(1034, 1078)} stroke="#e0c440" strokeWidth="1.400" />
      <path d={barPath(1078, 1180)} stroke="#e02c34" strokeWidth="1.400" />
      <Arrows pts={[[834, 294], [1067, 371], [1038, 356], [1044, 354], [1094, 363]]} color="#1c1ca8" />
      <Arrows pts={[[879, 304], [955, 338], [968, 348], [1013, 362], [1099, 359], [1105, 368], [1168, 394]]} color="#b83ce0" down />
      <Meters y={332} bars={[[830, "dgd"], [873, "dgd"], [915, "dgd"]]} />
      <Meters y={317} bars={[[848, "rrmmmmm"]]} />
      <Meters y={313} bars={[[890, "rrmmmmmm"], [932, "rrmmmmmm"]]} />
      <g className={`text-[5px] ${ARIAL}`} fill="#1c7a3c">
        <text x="831" y="350">7 ..</text><text x="874" y="350">7.1</text><text x="916" y="350">7.72</text>
        <g fill="#1678a8"><text x="831" y="354">MultiBPT</text><text x="873" y="354">MultiBPT</text><text x="916" y="354">MultiBPT</text></g>
        <g fill="#901830"><text x="848" y="350">7</text><text x="891" y="350">7.4</text><text x="934" y="350">7.45</text></g>
      </g>
      <g className={`text-[8px] ${ARIAL}`} fill="#1c1ca0">
        <text x="880" y="323">R7</text><text x="971" y="370">R7</text><text x="1110" y="399">R7</text>
        <text x="1160" y="387" fill="#606078">1.1711'9</text>
      </g>
      <g className={`text-[8px] font-bold ${SEGOE}`}>
        <text x="1071" y="333" fill="#0c0c9c">SELL Entry (1.1738'9) .</text>
        <text x="1071" y="337" fill="#0c0c9c">Safe SELL Entry (1.1737'2) .</text>
        <text x="1087" y="435" fill="#2450a8">Target (1.1688'9) .</text>
      </g>
      <g className={`text-[6px] font-bold ${SEGOE}`}>
        <text x="1081" y="374" fill="#e010c8">Trailing Stop 2 (1.1718'2) .</text>
        <text x="1081" y="386" fill="#c01828">Trailing Stop 1 (1.1715'6) .</text>
      </g>
      {EUR_TAGS.map(([y, fill, ink, t]) => <PriceTag key={t} x={1233} y={y} w={41} fill={fill} ink={ink} text={t} />)}
    </svg>
  );
}

/* ---------- Control center ---------- */

const POSITIONS: Row[] = [
  ["YM 06-18", "Short", "2", "25033", "$580.00"],
  ["RTY 06-18", "Short", "2", "1642.8", "$540.00"],
  ["YM 06-18", "Short", "2", "25018", "$410.00"],
  ["CL 07-18", "Long", "2", "72.52", "$380.00"],
  ["ZB 06-18", "Short", "2", "141.21875", "$125.00"],
  ["GC 06-18", "Long", "2", "1291.6", "$120.00"],
  ["YM 06-18", "Long", "2", "24966", "$110.00"],
  ["NQ 06-18", "Long", "2", "6916", "$100.00"],
  ["CL 07-18", "Long", "2", "72.66", "$800.00"],
];

const MENU: [string, string, string][] = [
  ["New", "M1 1h8v5M6 9H1V1M6 7.500h4M8 5.500v4", "w-[41px]"],
  ["Tools", "M2 0v3l2 1.500V10M8 0v3L6 4.500V10M5 4v6", "w-[43px]"],
  ["Workspaces", "M2 1h4l2.500 2.500V9H2zM6 1v3h2.500", "w-[68px]"],
  ["Connections", "M3 0v3M7 0v3M2 3h6v2L6 7H4L2 5zM5 7v3M3 4.500h4", "w-[69px]"],
  ["Help", "M5 1a4 4 0 1 0 .01 0zM5 1v2M5 7v2M1 5h2M7 5h2", "w-[40px]"],
];

function ControlCenter() {
  return (
    <section className="mt-[5px] bg-black">
      <header className="flex h-[11px] items-center bg-[#29282a] text-[7px] font-bold text-[#c8c8c8]">
        <h1 className="w-[97px] shrink-0 self-stretch bg-[#780812] pl-[4px] font-['DejaVu_Sans',sans-serif] text-[11px] leading-[11px] font-extralight whitespace-nowrap text-[#f0dcdc]">
          NINJA<b className="font-bold text-white">TRADER</b>
        </h1>
        <nav className="flex items-center pl-[7px]">
          {MENU.map(([t, d, w]) => (
            <button key={t} className={`flex items-center gap-[4px] ${w}`}>
              <svg viewBox="0 0 10 10" className="size-[8px]" fill="none" stroke="#d0d0d0" strokeWidth="1.500"><path d={d} /></svg>
              {t}
            </button>
          ))}
          <button className="flex items-center gap-[6px] whitespace-nowrap"><span className="text-[8px]">$</span>Buy Platform</button>
        </nav>
        <WindowButtons squares={0} />
      </header>
      <div className="flex">
        <table className="h-[111px] w-full table-fixed border-collapse text-left font-[Open_Sans,sans-serif] text-[6px] leading-[8px] font-semibold text-[#c2c2c2]">
          <colgroup><col className="w-[98px]" /><col className="w-[74px]" /><col className="w-[92px]" /><col className="w-[92px]" /><col className="w-[92px]" /></colgroup>
          <thead>
            <tr className="h-[17px]">
              {["Instrument", "Side", "Quantity", "Avg. price", "PnL"].map((h, i) => <th key={h} className={`p-0 pt-[2px] font-semibold ${i === 0 ? "pl-[5px]" : ""}`}>{h}</th>)}
            </tr>
          </thead>
          <tbody>
            {POSITIONS.map((r, n) => (
              <tr key={n}>{r.map((v, i) => <td key={i} className={`p-0 ${i === 0 ? "pl-[5px]" : i === 4 ? "text-[#0fa01c]" : ""}`}>{v}</td>)}</tr>
            ))}
          </tbody>
        </table>
        <div className="flex w-[8px] shrink-0 flex-col items-center pt-[4px] text-[5px] leading-[6px] text-[#ccc]">
          <span>▴</span><span>▾</span>
          <span className="mt-[2px] h-[28px] w-[4px] bg-[#2c2c2e]" />
        </div>
      </div>
      <nav className="flex h-[12px] items-center font-[Open_Sans,sans-serif] text-[6px] leading-[12px] font-semibold text-[#b4b4b4]">
        <span className="mr-[3px] ml-[8px] size-[8px] rounded-full bg-[#20b828]" />
        {[["Orders", "w-[33px]"], ["Executions", "w-[52px]"], ["Strategies", "w-[39px]"], ["Positions", "ml-[3px] w-[37px]"], ["Accounts", "w-[39px]"], ["Log", "w-[24px]"]].map(([t, w]) => (
          <button key={t} className={`${w} text-center ${t === "Positions" ? "border border-[#0c2c60] leading-[10px] text-[#125cb4]" : "bg-[#131216]"}`}>{t}</button>
        ))}
        <button aria-label="Add tab" className="flex h-[12px] w-[42px] items-center justify-center bg-[#131216]"><Plus size={6} strokeWidth={3} /></button>
      </nav>
    </section>
  );
}

/* ---------- Page ---------- */

export default function App() {
  return (
    <div className="min-h-screen bg-[linear-gradient(90deg,#0c0001,#260002_22%,#4c0003_45%,#3c0002_70%,#1c0001)] font-[Liberation_Sans,Arial,sans-serif]">
      <header className="relative z-10 h-[52px] pt-[17px] pl-[22px]">
        <span className="block font-[Lato,sans-serif] text-[31px] leading-[38px] text-[#c8b4b6]">Google</span>
      </header>
      <div className="grid grid-cols-[648fr_632fr] items-start">
        <Analyzer head={FUTURES_HEAD} rows={FUTURES} cols={FUTURES_COLS} cell={futuresCell} total={["156", "728.75"]} tall forex={false} />
        <Analyzer head={FOREX_HEAD} rows={FOREX} cols={FOREX_COLS} cell={forexCell} total={["27.7", "277"]} tall={false} forex />
      </div>
      <main className="grid grid-cols-[420fr_404fr_456fr] items-start">
        <section className="bg-black pt-[1px] pr-[4px] pb-[4px] pl-[10px]">
          <div className="-ml-[2px] pb-[2px]"><Toolbar symbol="ES 06-18" /></div>
          <EsChart />
          <ChartTabs tabs={["ES 06-18", "NQ 06-18", "YM 06-18", "6E 06-18", "RTY 06-18", "GC 06-18", "ZB 06-18", "CL 07-18", "FDAX 06-18"]} active="ES 06-18" pad="pl-[9px]" />
        </section>
        <section className="bg-black pr-[4px] pb-[4px]">
          <nav className="flex h-[8px] justify-end pr-[86px] text-[7px] leading-[8px]">
            <button className="px-[4px] text-[#0c468c]">Market Analyzer</button>
            <button aria-label="Add analyzer tab" className="flex w-[14px] items-center justify-center text-white"><Plus size={7} strokeWidth={3} /></button>
          </nav>
          <div className="pb-[2px]"><Toolbar symbol="CL 07-18" /></div>
          <ClChart />
          <ChartTabs tabs={["CL 07-18", "YM 06-18", "6E 06-18", "RTY 06-18", "ZB 06-18", "GC 06-18", "ES 06-18", "FDAX 06-18"]} active="CL 07-18" pad="mt-[2px] pl-[10px]" />
        </section>
        <section className="bg-black pb-[2px]">
          <div className="pt-[10px] pr-[4px] pb-[2px]"><Toolbar symbol="EURCHF" /></div>
          <div className="pr-[6px] pl-[3px]">
            <EurChart />
            <ChartTabs tabs={["EURUSD", "AUDUSD", "EURCHF", "EURGBP", "EURJPY", "GBPUSD", "USDCAD", "USDCHF", "USDJPY"]} active="EURCHF" pad="pl-[7px]" />
          </div>
          <ControlCenter />
        </section>
      </main>
    </div>
  );
}
